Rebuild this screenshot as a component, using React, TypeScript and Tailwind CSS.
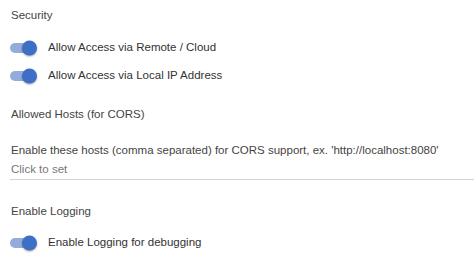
import React from "react";

function Toggle() {
  return (
    <div className="relative w-[27px] h-[15px] shrink-0 flex items-center">
      <div className="w-[24px] h-[10px] rounded-full bg-[#93acdb]" />
      <div className="absolute right-0 top-1/2 -translate-y-1/2 w-[15px] h-[15px] rounded-full bg-[#3d6fc6] shadow-[0_1px_2px_rgba(0,0,0,0.35)]" />
    </div>
  );
}

function ToggleRow({ label }: { label: string }) {
  return (
    <div className="flex items-center gap-[11px] pl-[10px] h-[28px]">
      <Toggle />
      <span className="text-[11.5px] text-[#333]">{label}</span>
    </div>
  );
}

export default function App() {
  return (
    <div
      className="w-[474px] h-[268px] bg-white overflow-hidden"
      style={{ fontFamily: "'Liberation Sans', Arial, sans-serif" }}
    >
      <div className="pt-[5px] pl-[11px] text-[11.5px] text-[#444] leading-[20px]">Security</div>
      <div className="mt-[9px] flex flex-col">
        <ToggleRow label="Allow Access via Remote / Cloud" />
        <ToggleRow label="Allow Access via Local IP Address" />
      </div>
      <div className="mt-[14px] pl-[11px] text-[11.5px] text-[#444] leading-[20px]">Allowed Hosts (for CORS)</div>
      <div className="mt-[16px] ml-[10px] border-b border-[#d4d4d4] pb-[1px]">
        <div className="pl-[1px] text-[11.5px] text-[#444] leading-[20px] whitespace-nowrap">
          Enable these hosts (comma separated) for CORS support, ex. 'http://localhost:8080'
        </div>
        <div className="pl-[1px] text-[11.5px] text-[#777] leading-[18px]">Click to set</div>
      </div>
      <div className="mt-[21px] pl-[11px] text-[11.5px] text-[#444] leading-[20px]">Enable Logging</div>
      <div className="mt-[8px]">
        <ToggleRow label="Enable Logging for debugging" />
      </div>
    </div>
  );
}
